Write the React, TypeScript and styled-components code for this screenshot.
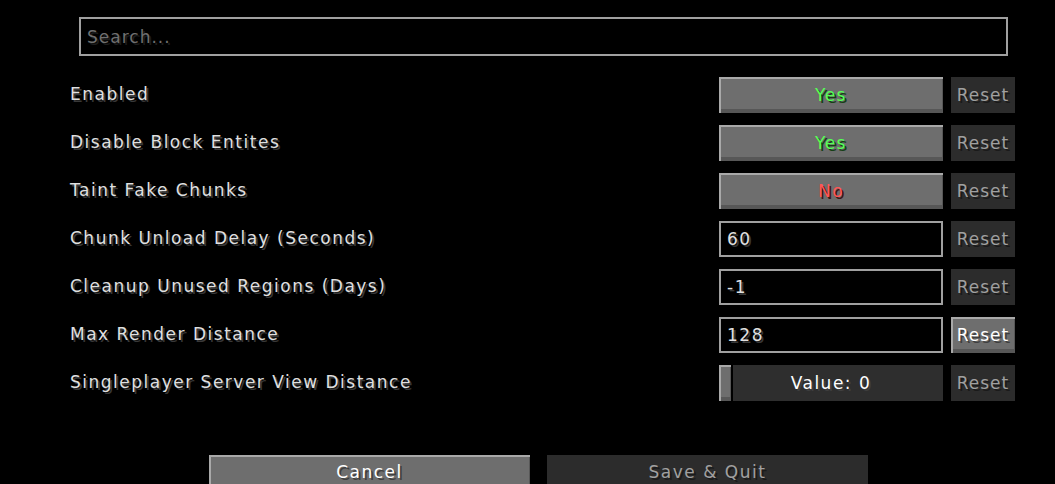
import React from 'react';
import styled, { createGlobalStyle, css } from 'styled-components';

const GlobalStyle = createGlobalStyle`
    html, body {
        margin: 0;
        padding: 0;
        background: #000;
        overflow: hidden;
    }
    body {
        font-family: 'DejaVu Sans', 'Noto Sans', sans-serif;
        font-size: 17px;
        letter-spacing: 1.5px;
        color: #e0e0e0;
    }
`;

// minecraft-style drop shadow: one gui pixel down and right
const shadow = (c: string) => `2px 2px 0 ${c}`;

const Screen = styled.main`
    width: 1055px;
    height: 484px;
    background: #000;
    padding-top: 17px;
    box-sizing: border-box;
`;

const SearchBox = styled.div`
    margin-left: 79px;
    width: 929px;
    height: 39px;
    box-sizing: border-box;
    border: 2px solid #a0a0a0;
    display: flex;
    align-items: center;
    padding-left: 6px;
    color: #707070;
    text-shadow: ${shadow('#1c1c1c')};
    letter-spacing: 1px;
`;

const Options = styled.div`
    margin: 21px 0 0 70px;
    width: 945px;
    display: grid;
    grid-template-columns: 1fr 224px 64px;
    grid-auto-rows: 36px;
    column-gap: 8px;
    row-gap: 12px;
`;

const Label = styled.div`
    display: flex;
    align-items: center;
    padding-bottom: 2px;
    color: #e0e0e0;
    text-shadow: ${shadow('#383838')};
`;

const buttonLook = css<{ $disabled?: boolean }>`
    box-sizing: border-box;
    display: flex;
    align-items: center;
    justify-content: center;
    ${(p) =>
        p.$disabled
            ? css`
                  background: #2c2c2c;
                  color: #a0a0a0;
                  text-shadow: ${shadow('#1a1a1a')};
              `
            : css`
                  background: #6e6e6e;
                  color: #ffffff;
                  text-shadow: ${shadow('#3f3f3f')};
                  box-shadow: inset 2px 2px 0 #a9a9a9, inset -1px -4px 0 #575757;
              `}
`;

const Toggle = styled.div<{ $on: boolean }>`
    ${buttonLook}
    color: ${(p) => (p.$on ? '#55ff55' : '#ff5555')};
    text-shadow: ${(p) => shadow(p.$on ? '#153f15' : '#3f1515')};
`;

const ResetButton = styled.div<{ $disabled?: boolean }>`
    ${buttonLook}
    letter-spacing: 1px;
`;

const TextField = styled.div`
    box-sizing: border-box;
    border: 2px solid #a0a0a0;
    background: #000;
    display: flex;
    align-items: center;
    padding-left: 6px;
    color: #e0e0e0;
    text-shadow: ${shadow('#383838')};
`;

const Slider = styled.div`
    position: relative;
    background: #2e2e2e;
    display: flex;
    align-items: center;
    justify-content: center;
    color: #ffffff;
    text-shadow: ${shadow('#3f3f3f')};
`;

const Handle = styled.div`
    position: absolute;
    left: 0;
    top: 0;
    width: 12px;
    height: 100%;
    background: #6e6e6e;
    box-shadow: inset 2px 2px 0 #a9a9a9, inset -1px -4px 0 #575757;
    border-right: 2px solid #000;
`;

const Footer = styled.div`
    margin: 54px 0 0 209px;
    display: flex;
    gap: 17px;
`;

const FooterButton = styled.div<{ $disabled?: boolean }>`
    ${buttonLook}
    width: 321px;
    height: 36px;
    align-items: flex-start;
    padding-top: 7px;
`;

type Option =
    | { label: string; kind: 'toggle'; on: boolean; changed?: boolean }
    | { label: string; kind: 'text'; value: string; changed?: boolean }
    | { label: string; kind: 'slider'; value: number; changed?: boolean };

const options: Option[] = [
    { label: 'Enabled', kind: 'toggle', on: true },
    { label: 'Disable Block Entites', kind: 'toggle', on: true },
    { label: 'Taint Fake Chunks', kind: 'toggle', on: false },
    { label: 'Chunk Unload Delay (Seconds)', kind: 'text', value: '60' },
    { label: 'Cleanup Unused Regions (Days)', kind: 'text', value: '-1' },
    { label: 'Max Render Distance', kind: 'text', value: '128', changed: true },
    { label: 'Singleplayer Server View Distance', kind: 'slider', value: 0 },
];

function App() {
    return (
        <Screen>
            <GlobalStyle />
            <SearchBox>Search...</SearchBox>
            <Options>
                {options.map((opt) => (
                    <React.Fragment key={opt.label}>
                        <Label>{opt.label}</Label>
                        {opt.kind === 'toggle' && <Toggle $on={opt.on}>{opt.on ? 'Yes' : 'No'}</Toggle>}
                        {opt.kind === 'text' && <TextField>{opt.value}</TextField>}
                        {opt.kind === 'slider' && (
                            <Slider>
                                <Handle />
                                Value: {opt.value}
                            </Slider>
                        )}
                        <ResetButton $disabled={!opt.changed}>Reset</ResetButton>
                    </React.Fragment>
                ))}
            </Options>
            <Footer>
                <FooterButton>Cancel</FooterButton>
                <FooterButton $disabled>Save &amp; Quit</FooterButton>
            </Footer>
        </Screen>
    );
}

export default App;
